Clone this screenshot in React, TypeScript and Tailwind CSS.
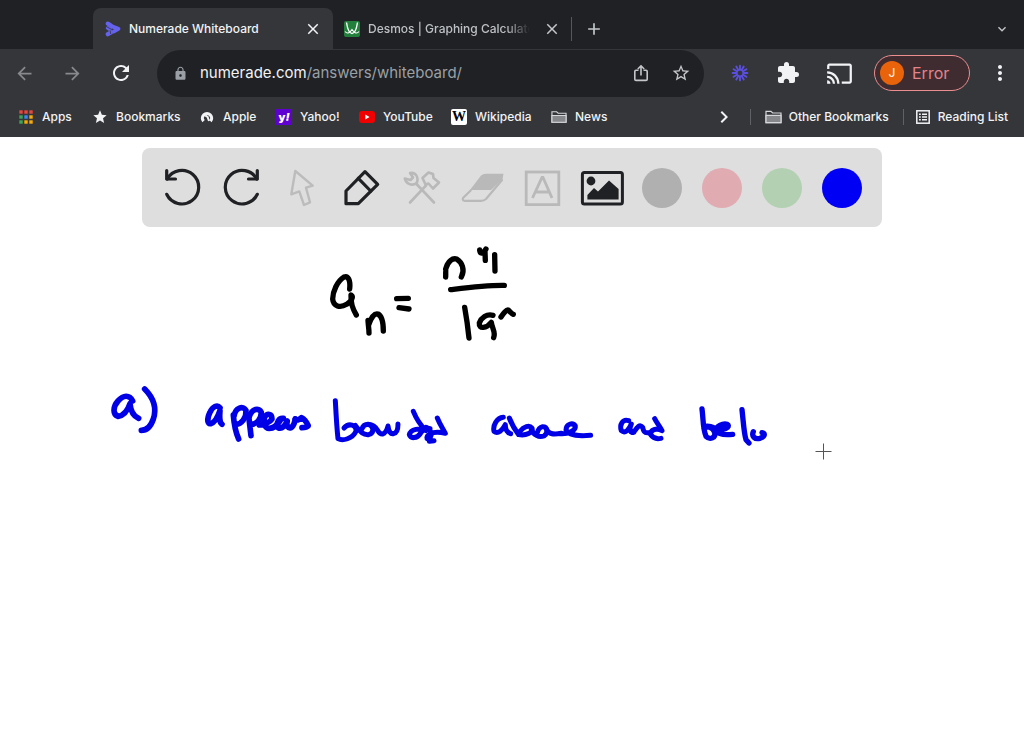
import React, { useState } from 'react';
import {
  MdArrowBack,
  MdArrowForward,
  MdCast,
  MdChevronRight,
  MdClose,
  MdExpandMore,
  MdExtension,
  MdLock,
  MdMoreVert,
  MdAdd,
  MdRefresh,
  MdStar,
  MdStarBorder,
} from 'react-icons/md';

// Pen strokes, grouped by phrase. Every group is recorded at 3x with its own origin.
const INK = [
  {
    label: 'a sub n = n^4 / 19^n',
    x: 320,
    y: 235,
    color: '#000000',
    width: 16,
    strokes: [
      'M89 162 C92 135 84 121 72 126 C52 138 38 170 38 192 C40 214 60 220 80 208 C94 198 102 186 93 180 C92 200 98 222 109 240',
      'M147 294 C147 280 144 266 144 256 M146 270 C154 246 164 234 174 237 C188 244 190 268 190 288',
      'M230 191 L265 190',
      'M237 218 L267 222',
      'M377 126 C378 108 375 100 381 90 M377 102 C384 78 398 68 410 72 C426 82 436 104 424 126',
      'M479 45 C480 58 488 58 498 42 M495 48 L496 76',
      'M524 59 L525 108',
      'M392 164 C440 158 500 150 553 151',
      'M434 217 C440 250 444 280 447 309',
      'M519 241 C500 236 484 248 478 264 C476 284 500 280 514 262 C516 280 528 292 521 308',
      'M543 246 C550 235 560 222 566 226 C572 232 576 237 580 238',
    ],
  },
  {
    label: 'a) appears',
    x: 100,
    y: 375,
    color: '#0000e6',
    width: 17,
    strokes: [
      'M98 78 C88 58 70 60 54 78 C38 96 38 118 54 124 C72 122 84 104 90 86 C92 108 102 124 116 130',
      'M134 42 C158 66 172 96 160 132 C152 156 140 166 124 166',
      'M360 98 C352 88 338 94 330 112 C320 132 322 148 332 146 C346 142 354 124 360 106 C358 130 358 142 366 148',
      'M400 120 C402 146 408 174 416 192 M402 124 C406 96 430 92 438 106 C440 128 424 148 408 148',
      'M446 122 L453 182 M447 128 C456 98 478 98 484 112 C484 132 470 148 454 148',
      'M478 150 C492 150 510 142 516 132 C516 116 502 114 494 126 C488 142 494 160 508 160 C524 160 530 150 540 138',
      'M550 130 C536 128 528 144 534 158 C546 164 556 150 562 138 C558 150 564 162 574 158 C584 150 584 140 586 132',
      'M586 132 C592 138 596 134 604 128 C614 132 620 142 625 152 C620 158 614 158 606 158',
    ],
  },
  {
    label: 'bounded',
    x: 320,
    y: 390,
    color: '#0000e6',
    width: 15,
    strokes: [
      'M46 32 C48 70 50 110 54 146 C68 154 98 146 108 124 C110 104 86 98 72 114',
      'M106 106 C118 124 130 136 146 134 C164 130 162 106 144 103 C134 103 128 110 126 116',
      'M150 104 C174 104 170 134 188 132 C196 130 202 116 204 108 C206 124 212 134 222 130 C232 128 234 112 234 102',
      'M280 64 C288 84 300 104 318 122 C300 112 272 118 268 134 C272 148 292 144 300 132 C308 120 318 112 330 116',
      'M318 112 C334 120 338 136 328 146 C318 150 318 138 330 132 M328 154 L342 152',
      'M352 84 C360 104 370 118 376 130 C360 126 344 124 330 132',
    ],
  },
  {
    label: 'above and',
    x: 480,
    y: 400,
    color: '#0000e6',
    width: 15,
    strokes: [
      'M70 52 C50 54 38 76 42 94 C54 104 68 90 76 74 C76 88 82 98 92 101',
      'M88 54 C94 70 104 88 116 104 C138 108 160 98 156 84 C148 74 130 80 122 92',
      'M154 88 C160 104 176 114 192 108 C206 98 202 80 188 80 C178 82 174 90 172 98',
      'M200 88 C206 104 222 104 244 100',
      'M240 101 C264 103 288 92 286 78 C278 66 258 72 258 90 C264 106 300 109 332 106',
      'M446 62 C428 56 418 74 424 92 C436 102 448 88 454 72 C446 90 452 102 462 96 C470 84 478 70 488 82 C490 92 492 100 506 98',
      'M524 56 C530 68 540 80 546 92 C530 82 510 90 512 104 C520 116 534 117 543 115',
    ],
  },
  {
    label: 'belo',
    x: 680,
    y: 395,
    color: '#0000e6',
    width: 16,
    strokes: [
      'M66 42 C70 70 68 100 78 124 C90 136 108 128 104 112 C98 96 80 92 72 100',
      'M76 94 C98 90 104 104 124 104 C142 102 150 92 142 88 C128 84 108 94 108 108 C118 121 140 120 158 118',
      'M186 44 C190 80 192 116 198 134 L207 144',
      'M220 110 C214 124 224 134 240 130 C256 124 256 114 246 113',
    ],
  },
];

const SWATCHES = [
  { name: 'Gray', className: 'bg-[#b0b0b0]' },
  { name: 'Red', className: 'bg-[#e0acb2]' },
  { name: 'Green', className: 'bg-[#b3d0b2]' },
  { name: 'Blue', className: 'bg-[#0000f5]' },
];

const APP_COLORS = ['#e8453c', '#e8453c', '#e8453c', '#3aa757', '#4285f4', '#f9ab00', '#3aa757', '#f9ab00', '#f9ab00'];

function AppsIcon() {
  return (
    <svg width="14" height="14" viewBox="0 0 14 14">
      {APP_COLORS.map((fill, i) => (
        <rect key={i} x={(i % 3) * 5 + 0.3} y={Math.floor(i / 3) * 5 + 0.3} width="3.4" height="3.4" fill={fill} />
      ))}
    </svg>
  );
}

function AppleIcon() {
  return (
    <svg width="14" height="14" viewBox="0 0 14 14" fill="none">
      <path d="M3.6 11.2 A4.6 4.6 0 1 1 10.4 11.2" stroke="#f1f3f4" strokeWidth="3.2" />
      <path d="M5.2 5.4 L7.6 7 L9 11" stroke="#f1f3f4" strokeWidth="2" />
    </svg>
  );
}

function YahooIcon() {
  return (
    <span className="flex h-4 w-4 items-center justify-center bg-[#5f01d1] text-[11px] leading-none font-black text-white">
      y<i>!</i>
    </span>
  );
}

function YouTubeIcon() {
  return (
    <svg width="16" height="12" viewBox="0 0 16 12">
      <rect width="16" height="12" rx="3" fill="#f00000" />
      <path d="M6.3 3.5 L10.6 6 L6.3 8.5 Z" fill="#fff" />
    </svg>
  );
}

function WikipediaIcon() {
  return (
    <span className="flex h-4 w-4 items-center justify-center rounded-xs bg-white font-['Liberation_Serif',serif] text-[14px] leading-none font-bold text-black">
      W
    </span>
  );
}

function FolderIcon() {
  return (
    <svg width="17" height="14" viewBox="0 0 17 14" fill="none" stroke="#d5d7da" strokeWidth="1.2">
      <path d="M1 12.6 V1.4 H6 L7.6 3 H16 V12.6 Z" />
      <path d="M1 5.4 H16 V12.6 H1 Z" fill="#85878a" />
    </svg>
  );
}

function ReadingListIcon() {
  return (
    <svg width="14" height="14" viewBox="0 0 14 14" fill="none" stroke="#f1f3f4" strokeWidth="1.5">
      <rect x="0.8" y="0.8" width="12.4" height="12.4" />
      <path d="M3 4.2 H4.8 M3 7 H4.8 M3 9.8 H4.8 M6 4.2 H11 M6 7 H11 M6 9.8 H11" />
    </svg>
  );
}

const BOOKMARKS = [
  { label: 'Apps', icon: <AppsIcon />, width: 'w-[74px]' },
  { label: 'Bookmarks', icon: <MdStar size={16} />, width: 'w-[107px]' },
  { label: 'Apple', icon: <AppleIcon />, width: 'w-[77px]' },
  { label: 'Yahoo!', icon: <YahooIcon />, width: 'w-[83px]' },
  { label: 'YouTube', icon: <YouTubeIcon />, width: 'w-[92px]' },
  { label: 'Wikipedia', icon: <WikipediaIcon />, width: 'w-[100px]' },
  { label: 'News', icon: <FolderIcon />, width: 'w-[74px]' },
];

function NumeradeIcon() {
  return (
    <svg width="16" height="16" viewBox="0 0 16 16" fill="none" stroke="#6562ee" strokeLinecap="round">
      <path d="M2.8 2.6 L5.6 4.2 M2.8 13.2 L6 11.4" strokeWidth="4.2" />
      <path d="M2.8 7 L5 8.2 M7 5.4 L13.4 7.8 L8.6 10.4" strokeWidth="4" strokeLinejoin="round" />
      <path d="M1 5.4 L7 8.6 M5.6 12.6 L5.2 9.8" stroke="#35363a" strokeWidth="0.8" />
    </svg>
  );
}

function DesmosIcon() {
  return (
    <svg width="16" height="16" viewBox="0 0 16 16" fill="none" stroke="#fff">
      <rect width="16" height="16" rx="2" fill="#23803c" stroke="none" />
      <path d="M2.5 1.5 C3.5 8 5 12.5 8 12.5 C11 12.5 12.5 8 13.5 1.5" strokeWidth="1.4" />
      <path d="M1 10.5 C3.5 13.5 6 11.5 8 8.5 C10 11.5 12.5 13.5 15 10.5" strokeWidth="1.1" />
    </svg>
  );
}

function ShareIcon() {
  return (
    <svg width="16" height="18" viewBox="0 0 16 18" fill="none" stroke="#c4c7ca" strokeWidth="1.6">
      <path d="M5.5 6.2 H3 Q1.8 6.2 1.8 7.4 V15.2 Q1.8 16.4 3 16.4 H13 Q14.2 16.4 14.2 15.2 V7.4 Q14.2 6.2 13 6.2 H10.5" />
      <path d="M8 11.5 V2 M4.8 5 L8 1.8 L11.2 5" />
    </svg>
  );
}

function LoomIcon() {
  return (
    <svg width="18" height="18" viewBox="-9 -9 18 18" stroke="#5b4fe0" strokeWidth="1.9" strokeLinecap="round" fill="none">
      {[0, 30, 60, 90, 120, 150, 180, 210, 240, 270, 300, 330].map((a) => (
        <path key={a} d="M0 -3.6 V-7.4" transform={`rotate(${a})`} />
      ))}
      <circle r="3.2" strokeWidth="1.5" />
    </svg>
  );
}

const TOOLS = [
  {
    name: 'Undo',
    icon: (
      <g stroke="#202124" strokeWidth="3.2">
        <path d="M6.7 28.3 A16.8 16.8 0 1 0 7.2 13" />
        <path d="M6.7 4.5 V13 H15.5" />
      </g>
    ),
  },
  {
    name: 'Redo',
    icon: (
      <g stroke="#202124" strokeWidth="3.2">
        <path d="M37.3 28.3 A16.8 16.8 0 1 1 36.8 13" />
        <path d="M37.3 4.5 V13 H28.5" />
      </g>
    ),
  },
  {
    name: 'Select',
    icon: <path d="M15.3 5 L32.7 19.7 L26 21.7 L30 36.3 L24 39 L19.3 25.4 L11.3 28.3 Z" stroke="#bcbcbc" strokeWidth="2.4" />,
  },
  {
    name: 'Pen',
    icon: (
      <g stroke="#202124" strokeWidth="3.2">
        <path d="M25 5.7 L37.7 18.3 L18.3 37.7 H6 V25 Z" />
        <path d="M18.3 12.3 L30.7 25" />
      </g>
    ),
  },
  {
    name: 'Tools',
    icon: (
      <g stroke="#b9b9b9" strokeWidth="2.6">
        <path d="M10 36.5 L26 19.5 M16 17.5 L34 36.5" />
        <path d="M10 7 C15.5 6 19 11 16.8 17 C12 20.5 6 18 4.8 12.5 L10.5 14 L13 11.5 Z" />
        <path d="M22.5 12 L28.5 6.5 L33 8 L33.5 12 L39 16.5 L33 22.5 L28.5 17.5 L25.5 18.5 Z" />
      </g>
    ),
  },
  {
    name: 'Eraser',
    icon: (
      <g stroke="#b9b9b9" strokeWidth="2.2">
        <path d="M21 9.5 Q23 7.7 26 7.7 H43.5 L42.5 13 L31 24 H10 Z" fill="#b9b9b9" stroke="none" />
        <path d="M10.7 24.5 L3 32 Q2 34.8 5 34.8 H21 Q24 34.8 26 33 L42 14" />
      </g>
    ),
  },
  {
    name: 'Text',
    icon: (
      <g stroke="#b9b9b9" strokeWidth="2.8" strokeLinecap="butt" strokeLinejoin="miter">
        <rect x="6.2" y="6" width="32.6" height="32.6" />
        <path d="M12.5 32 L22 11.5 H23 L32 32 M15.5 26 H29.5" />
      </g>
    ),
  },
  {
    name: 'Image',
    icon: (
      <g stroke="#202124" strokeWidth="3">
        <rect x="2.4" y="6.4" width="40" height="31.6" rx="2" />
        <circle cx="11" cy="15" r="4.4" fill="#202124" stroke="none" />
        <path d="M7.4 33.5 V29 L14 22 L18 25.5 L29 14.5 L38.6 23 V33.5 Z" fill="#202124" stroke="none" />
      </g>
    ),
  },
];

function Whiteboard() {
  const [tool, setTool] = useState('Pen');
  const [color, setColor] = useState('Blue');

  return (
    <main className="relative flex-1 bg-white px-4 pt-[11px]">
      <div className="relative z-10 mx-auto grid h-[79px] max-w-[740px] grid-cols-12 place-items-center rounded-lg bg-[#dedede] px-[10px]">
        {TOOLS.map((t) => (
          <button key={t.name} aria-label={t.name} aria-pressed={tool === t.name} onClick={() => setTool(t.name)}>
            <svg width="44" height="44" viewBox="0 0 44 44" fill="none" strokeLinecap="round" strokeLinejoin="round">
              {t.icon}
            </svg>
          </button>
        ))}
        {SWATCHES.map((s) => (
          <button
            key={s.name}
            aria-label={s.name}
            aria-pressed={color === s.name}
            onClick={() => setColor(s.name)}
            className={`h-10 w-10 rounded-full ${s.className}`}
          />
        ))}
      </div>

      {/* Drawing surface */}
      <svg className="absolute top-0 left-0 w-full" viewBox="0 137 1024 605" fill="none" strokeLinecap="round" strokeLinejoin="round">
        {INK.map((g) => (
          <g key={g.label} aria-label={g.label} transform={`translate(${g.x} ${g.y}) scale(0.3333)`} stroke={g.color} strokeWidth={g.width}>
            {g.strokes.map((d) => (
              <path key={d} d={d} />
            ))}
          </g>
        ))}
        <path d="M823.5 443.5 V459.5 M815.5 451.5 H831.5" stroke="#555" strokeWidth="1" strokeLinecap="butt" />
      </svg>
    </main>
  );
}

export default function App() {
  const [url, setUrl] = useState('numerade.com/answers/whiteboard/');
  const slash = url.indexOf('/') < 0 ? url.length : url.indexOf('/');

  return (
    <div className="flex min-h-screen flex-col bg-white font-['Inter',sans-serif] text-xs text-[#f1f3f4]">
      {/* Tabs */}
      <div className="flex h-[49px] items-end bg-[#202124] pr-[14px] pl-[93px]">
        <div className="flex h-[41px] w-[240px] items-center rounded-t-lg bg-[#35363a] pr-[11px] pl-3">
          <NumeradeIcon />
          <span className="ml-2 flex-1 font-medium whitespace-nowrap">Numerade Whiteboard</span>
          <button aria-label="Close Numerade Whiteboard">
            <MdClose size={18} />
          </button>
        </div>
        <div className="flex h-[41px] w-[238px] items-center pr-[10px] pl-[11px]">
          <DesmosIcon />
          <span className="ml-2 w-[162px] overflow-hidden mask-r-from-85% font-medium whitespace-nowrap text-[#bdc1c6]">
            Desmos | Graphing Calculato
          </span>
          <button className="ml-auto text-[#c4c7ca]" aria-label="Close Desmos">
            <MdClose size={18} />
          </button>
        </div>
        <div className="flex h-[41px] flex-1 items-center">
          <span className="h-6 w-px bg-[#55575b]" />
          <button className="ml-3 text-[#c4c7ca]" aria-label="New tab">
            <MdAdd size={20} />
          </button>
          <button className="ml-auto text-[#c4c7ca]" aria-label="Search tabs">
            <MdExpandMore size={16} />
          </button>
        </div>
      </div>

      {/* Address bar */}
      <div className="flex h-12 items-center bg-[#35363a] pr-3 pl-[14px]">
        <button className="text-[#88898c]" aria-label="Back">
          <MdArrowBack size={21} />
        </button>
        <button className="ml-[27px] text-[#88898c]" aria-label="Forward">
          <MdArrowForward size={21} />
        </button>
        <button className="ml-[26px]" aria-label="Reload">
          <MdRefresh size={24} />
        </button>
        <div className="ml-6 flex h-[47px] min-w-0 flex-1 items-center rounded-full bg-[#202124] pr-[13px] pl-4">
          <MdLock size={15} className="text-[#9aa0a6]" />
          <label className="relative ml-3 flex-1 text-[15px]">
            <span aria-hidden="true" className="absolute inset-0 text-[#9aa0a6]">
              <span className="text-[#f1f3f4]">{url.slice(0, slash)}</span>
              {url.slice(slash)}
            </span>
            <input
              aria-label="Address"
              value={url}
              onChange={(e) => setUrl(e.target.value)}
              className="relative block w-full text-transparent caret-white outline-none"
            />
          </label>
          <button aria-label="Share">
            <ShareIcon />
          </button>
          <button className="ml-[22px] text-[#c4c7ca]" aria-label="Bookmark this page">
            <MdStarBorder size={20} />
          </button>
        </div>
        <button className="ml-[27px]" aria-label="Loom">
          <LoomIcon />
        </button>
        <button className="ml-[27px]" aria-label="Extensions">
          <MdExtension size={24} />
        </button>
        <button className="ml-[26px]" aria-label="Cast">
          <MdCast size={27} />
        </button>
        <button className="ml-[21px] flex h-9 w-24 items-center gap-2 rounded-full border border-[#ec8e90] bg-[#3e2c31] pl-[5px] text-base text-[#e4838a]">
          <span className="flex h-6 w-6 items-center justify-center rounded-full bg-[#e8630a] text-xs text-white">J</span>
          Error
        </button>
        <button className="ml-[18px]" aria-label="Menu">
          <MdMoreVert size={24} />
        </button>
      </div>

      {/* Bookmarks bar */}
      <nav className="flex h-10 items-center bg-[#35363a] pr-4 pl-[18px] font-medium">
        {BOOKMARKS.map((b) => (
          <a key={b.label} href="#" className={`flex shrink-0 items-center gap-2 whitespace-nowrap ${b.width}`}>
            <span className="flex w-4 justify-center">{b.icon}</span>
            {b.label}
          </a>
        ))}
        <button className="ml-auto" aria-label="More bookmarks">
          <MdChevronRight size={24} />
        </button>
        <span className="ml-[14px] h-4 w-px bg-[#5f6166]" />
        <a href="#" className="ml-[14px] flex items-center gap-[7px] whitespace-nowrap">
          <FolderIcon />
          Other Bookmarks
        </a>
        <span className="ml-[14px] h-4 w-px bg-[#5f6166]" />
        <a href="#" className="ml-3 flex items-center gap-2 whitespace-nowrap">
          <ReadingListIcon />
          Reading List
        </a>
      </nav>

      <Whiteboard />
    </div>
  );
}
